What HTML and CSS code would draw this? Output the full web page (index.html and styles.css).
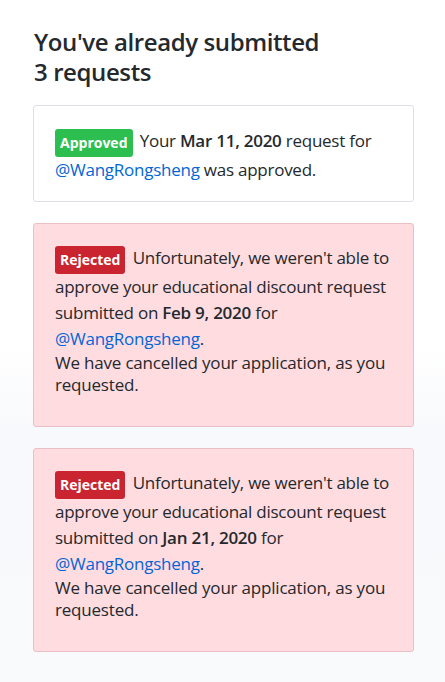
FILE: index.html
```html
<!DOCTYPE html>
<html>
<head>
<meta charset="utf-8">
<link rel="stylesheet" href="styles.css">
</head>
<body>
<div class="page">
  <h2 class="title">You've already submitted<br>3 requests</h2>
  <div class="card">
    <p class="msg"><span class="label label-green">Approved</span> Your <strong>Mar 11, 2020</strong> request for <a href="#">@WangRongsheng</a> was approved.</p>
  </div>
  <div class="card card-error">
    <p class="msg"><span class="label label-red">Rejected</span> Unfortunately, we weren't able to approve your educational discount request submitted on <strong>Feb 9, 2020</strong> for <a href="#">@WangRongsheng</a>.</p>
    <p class="note">We have cancelled your application, as you requested.</p>
  </div>
  <div class="card card-error">
    <p class="msg"><span class="label label-red">Rejected</span> Unfortunately, we weren't able to approve your educational discount request submitted on <strong>Jan 21, 2020</strong> for <a href="#">@WangRongsheng</a>.</p>
    <p class="note">We have cancelled your application, as you requested.</p>
  </div>
</div>
</body>
</html>
```
FILE: styles.css
```css
html, body {
  margin: 0;
  padding: 0;
}
body {
  min-height: 682px;
  background: linear-gradient(to bottom, #ffffff 0, #ffffff 50%, #f8f9fc 62%, #f9fafc 100%);
  font-family: "Open Sans", "Noto Sans", sans-serif;
  color: #24292e;
}
.page {
  padding: 27px 31px 20px 33px;
}
.title {
  margin: 0 0 18px 1px;
  font-size: 24px;
  line-height: 30px;
  font-weight: 600;
  letter-spacing: -0.4px;
}
.card {
  border: 1px solid #dcdfe3;
  border-radius: 3px;
  background: #fff;
  padding: 22px 20px 18px 21px;
  margin-bottom: 21px;
}
.card-error {
  background: #ffdce0;
  border-color: #ebbfc6;
  padding-top: 21px;
  padding-bottom: 30px;
}
.msg {
  margin: 0;
  font-size: 17px;
  line-height: 26px;
  letter-spacing: -0.25px;
}
.note {
  margin: 0;
  font-size: 17px;
  line-height: 22px;
  letter-spacing: -0.2px;
}
.msg strong {
  font-weight: 600;
}
.msg a {
  color: #0366d6;
  text-decoration: none;
}
.label {
  display: inline-block;
  padding: 0 5px;
  height: 28px;
  line-height: 28px;
  border-radius: 3px;
  color: #fff;
  font-size: 14px;
  font-weight: 700;
  letter-spacing: 0;
  margin-right: 3px;
  vertical-align: -1px;
}
.label-green {
  background: #2cbe4e;
}
.label-red {
  background: #cb2431;
}
```
